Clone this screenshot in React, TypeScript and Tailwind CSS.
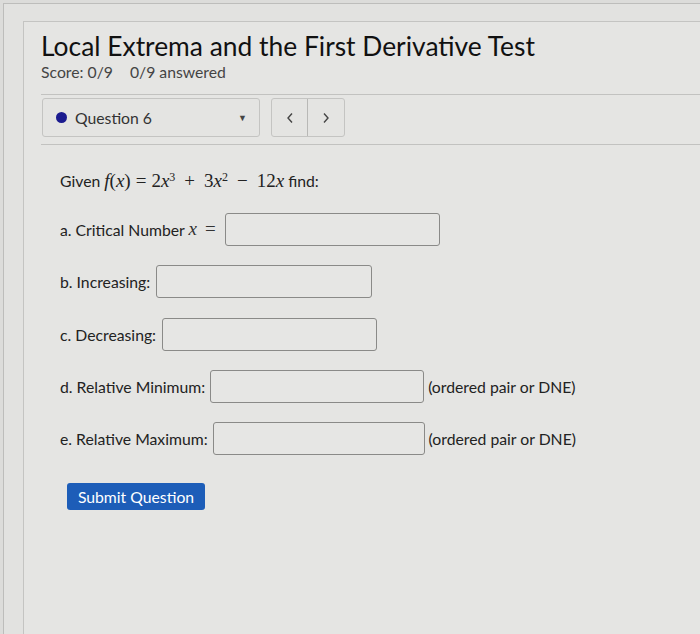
import React from 'react';

function Field({ w }: { w: string }) {
  return <input className={`h-[33px] ${w} rounded-[3px] border border-[#8a8a88] bg-[#e6e6e4] outline-none`} />;
}

function Note() {
  return <span className="ml-[4px] text-[15.75px] text-[#222]">(ordered pair or DNE)</span>;
}

export default function App() {
  const mathFont = { fontFamily: '"Liberation Serif", "DejaVu Serif", serif' };
  return (
    <div className="h-[634px] w-[700px] overflow-hidden bg-[#dcdcda] pl-[3px] pt-[3px]" style={{ fontFamily: 'Lato, "Open Sans", sans-serif' }}>
      <div className="h-full border-l border-t border-[#bdbdbb] bg-[#e2e2e0] pl-[19px] pt-[17px]">
        <div className="h-full border-l border-t border-[#c4c4c2] bg-[#e5e5e3] pl-[17px] pt-[8px]">
          <h1 className="text-[26.4px] leading-[32px] text-[#111]">Local Extrema and the First Derivative Test</h1>
          <div className="flex gap-[17px] text-[15.75px] leading-[20px] text-[#444]">
            <span>Score: 0/9</span>
            <span>0/9 answered</span>
          </div>

          <div className="mt-[12px] border-t border-b border-[#c2c2c0] pt-[3px] pb-[7px]">
            <div className="flex items-center gap-[11px] pl-[1px]">
              <div className="flex h-[39px] w-[218px] items-center rounded-[3px] border border-[#c4c4c2] bg-[#e4e4e2] pl-[13px] pr-[12px]">
                <span className="h-[11px] w-[11px] rounded-full bg-[#1b1b8f]" />
                <span className="ml-[8px] flex-1 text-[15.75px] text-[#333]">Question 6</span>
                <span className="text-[9px] text-[#444]">▼</span>
              </div>
              <div className="flex h-[39px] w-[74px] rounded-[3px] border border-[#c4c4c2] bg-[#e4e4e2]">
                <span className="flex w-[36px] items-center justify-center border-r border-[#b8b8b6]">
                  <svg width="8" height="12" viewBox="0 0 8 12" fill="none" stroke="#444" strokeWidth="1.4"><path d="M6 1.5 2 6l4 4.5" /></svg>
                </span>
                <span className="flex flex-1 items-center justify-center">
                  <svg width="8" height="12" viewBox="0 0 8 12" fill="none" stroke="#444" strokeWidth="1.4"><path d="M2 1.5 6 6l-4 4.5" /></svg>
                </span>
              </div>
            </div>
          </div>

          <div className="pl-[19px] text-[15.75px] text-[#222]">
            <p className="mt-[24px] leading-[24px]">
              Given{' '}
              <span style={mathFont} className="text-[19px]">
                <i>f</i>(<i>x</i>)<span className="mx-[5px]">=</span>2<i>x</i><sup className="text-[12px]">3</sup><span className="mx-[9px]">+</span>3<i>x</i><sup className="text-[12px]">2</sup><span className="mx-[9px]">−</span>12<i>x</i>
              </span>{' '}
              find:
            </p>

            <div className="mt-[20px] flex items-center">
              <span>a. Critical Number&nbsp;</span>
              <span style={mathFont} className="mr-[9px] text-[19px] text-[#333]"><i>x</i><span className="ml-[8px]">=</span></span>
              <Field w="w-[215px]" />
            </div>
            <div className="mt-[19px] flex items-center">
              <span className="mr-[6px]">b. Increasing:</span>
              <Field w="w-[216px]" />
            </div>
            <div className="mt-[20px] flex items-center">
              <span className="mr-[6px]">c. Decreasing:</span>
              <Field w="w-[215px]" />
            </div>
            <div className="mt-[19px] flex items-center">
              <span className="mr-[5px]">d. Relative Minimum:</span>
              <Field w="w-[214px]" />
              <Note />
            </div>
            <div className="mt-[19px] flex items-center">
              <span className="mr-[5px]">e. Relative Maximum:</span>
              <Field w="w-[212px]" />
              <Note />
            </div>

            <button className="mt-[28px] ml-[7px] h-[27px] w-[138px] rounded-[3px] bg-[#1d5db8] text-[15.75px] text-white">Submit Question</button>
          </div>
        </div>
      </div>
    </div>
  );
}
